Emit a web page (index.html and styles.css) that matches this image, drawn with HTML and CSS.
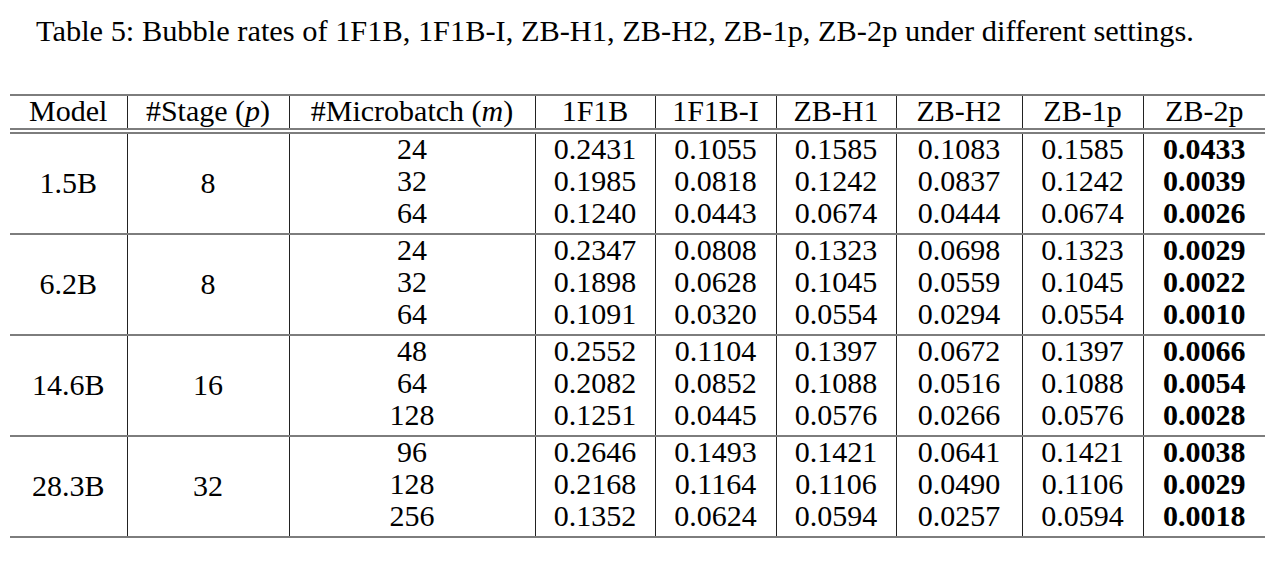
FILE: index.html
```html
<!DOCTYPE html>
<html>
<head>
<meta charset="utf-8">
<link rel="stylesheet" href="styles.css">
</head>
<body>
<div class="page">
  <p class="caption">Table 5: Bubble rates of 1F1B, 1F1B-I, ZB-H1, ZB-H2, ZB-1p, ZB-2p under different settings.</p>
  <table class="rates">
    <colgroup>
      <col class="c-model"><col class="c-stage"><col class="c-mb">
      <col class="c-n1"><col class="c-n2"><col class="c-n3"><col class="c-n4"><col class="c-n5"><col class="c-n6">
    </colgroup>
    <thead>
      <tr>
        <th class="first">Model</th>
        <th>#Stage (<i>p</i>)</th>
        <th>#Microbatch (<i>m</i>)</th>
        <th>1F1B</th>
        <th>1F1B-I</th>
        <th>ZB-H1</th>
        <th>ZB-H2</th>
        <th>ZB-1p</th>
        <th>ZB-2p</th>
      </tr>
    </thead>
    <tbody>
      <tr><td class="first" rowspan="3">1.5B</td><td rowspan="3">8</td><td>24</td><td>0.2431</td><td>0.1055</td><td>0.1585</td><td>0.1083</td><td>0.1585</td><td class="best">0.0433</td></tr>
      <tr><td>32</td><td>0.1985</td><td>0.0818</td><td>0.1242</td><td>0.0837</td><td>0.1242</td><td class="best">0.0039</td></tr>
      <tr class="last"><td>64</td><td>0.1240</td><td>0.0443</td><td>0.0674</td><td>0.0444</td><td>0.0674</td><td class="best">0.0026</td></tr>
    </tbody>
    <tbody>
      <tr><td class="first" rowspan="3">6.2B</td><td rowspan="3">8</td><td>24</td><td>0.2347</td><td>0.0808</td><td>0.1323</td><td>0.0698</td><td>0.1323</td><td class="best">0.0029</td></tr>
      <tr><td>32</td><td>0.1898</td><td>0.0628</td><td>0.1045</td><td>0.0559</td><td>0.1045</td><td class="best">0.0022</td></tr>
      <tr class="last"><td>64</td><td>0.1091</td><td>0.0320</td><td>0.0554</td><td>0.0294</td><td>0.0554</td><td class="best">0.0010</td></tr>
    </tbody>
    <tbody>
      <tr><td class="first" rowspan="3">14.6B</td><td rowspan="3">16</td><td>48</td><td>0.2552</td><td>0.1104</td><td>0.1397</td><td>0.0672</td><td>0.1397</td><td class="best">0.0066</td></tr>
      <tr><td>64</td><td>0.2082</td><td>0.0852</td><td>0.1088</td><td>0.0516</td><td>0.1088</td><td class="best">0.0054</td></tr>
      <tr class="last"><td>128</td><td>0.1251</td><td>0.0445</td><td>0.0576</td><td>0.0266</td><td>0.0576</td><td class="best">0.0028</td></tr>
    </tbody>
    <tbody>
      <tr><td class="first" rowspan="3">28.3B</td><td rowspan="3">32</td><td>96</td><td>0.2646</td><td>0.1493</td><td>0.1421</td><td>0.0641</td><td>0.1421</td><td class="best">0.0038</td></tr>
      <tr><td>128</td><td>0.2168</td><td>0.1164</td><td>0.1106</td><td>0.0490</td><td>0.1106</td><td class="best">0.0029</td></tr>
      <tr class="last"><td>256</td><td>0.1352</td><td>0.0624</td><td>0.0594</td><td>0.0257</td><td>0.0594</td><td class="best">0.0018</td></tr>
    </tbody>
  </table>
</div>
</body>
</html>
```

FILE: styles.css
```css
html, body {
  margin: 0;
  padding: 0;
  background: #ffffff;
}

.page {
  padding: 16px 0 0 10px;
  font-family: "Liberation Serif", "Times New Roman", serif;
  color: #000;
}

.caption {
  margin: 0 0 0 26px;
  font-size: 30.4px;
  line-height: 31px;
  white-space: nowrap;
}

.rates {
  margin-top: 47px;
  border-collapse: collapse;
  table-layout: fixed;
  width: 1255px;
  font-size: 30px;
}

.c-model { width: 117px; }
.c-stage { width: 162px; }
.c-mb { width: 246px; }
.c-n1 { width: 120px; }
.c-n2 { width: 121px; }
.c-n3 { width: 120px; }
.c-n4 { width: 126px; }
.c-n5 { width: 121px; }
.c-n6 { width: 122px; }

.rates th,
.rates td {
  padding: 0 0 2px;
  text-align: center;
  vertical-align: middle;
  font-weight: normal;
  line-height: 30px;
  border-left: 1px solid #222;
  white-space: nowrap;
}

.rates .first {
  border-left: none;
}

.rates thead th {
  padding-bottom: 3px;
  line-height: 29px;
  border-top: 2px solid #7d7d7d;
  border-bottom: 6px double #7d7d7d;
}

.rates tbody + tbody tr:first-child td {
  border-top: 2px solid #7d7d7d;
}

.rates tbody:last-child tr.last td,
.rates tbody:last-child td.first,
.rates tbody:last-child td[rowspan] {
  border-bottom: 2px solid #7d7d7d;
}

.rates tr.last td {
  padding-bottom: 5px;
}

.rates td.best {
  font-weight: bold;
}
```
